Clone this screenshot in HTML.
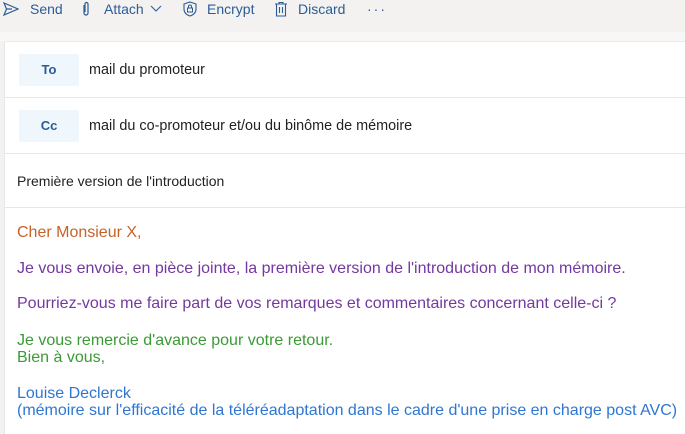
<!DOCTYPE html>
<html><head><meta charset="utf-8"><style>
*{margin:0;padding:0;box-sizing:border-box}
body{width:685px;height:434px;overflow:hidden;background:#f3f2f1;font-family:"Liberation Sans",sans-serif;position:relative}
.tb{position:absolute;top:0;left:0;height:32px;width:685px;background:#f3f2f1}
.band{position:absolute;top:32px;left:0;width:685px;height:9px;background:#f8f7f6}
.ti{position:absolute;top:1px;font-size:14px;color:#2b5c96;line-height:16px}
.panel{position:absolute;left:4px;top:41px;width:681px;height:393px;background:#fff;border-left:1px solid #e8e8e8;border-top:1px solid #ebebeb}
.hr{position:absolute;left:0;right:0;height:1px;background:#e6e6e6}
.box{position:absolute;left:14px;width:60px;height:32px;background:#eff6fc;color:#2b5c96;font-weight:bold;font-size:13px;text-align:center;line-height:32px}
.f{position:absolute;left:84px;font-size:14.4px;color:#222;line-height:16px}
.b{position:absolute;left:12px;font-family:Arial,"Liberation Sans",sans-serif;font-size:16px;line-height:17px;white-space:nowrap}
</style></head><body>
<div class="tb">
<svg style="position:absolute;left:3px;top:2px" width="16" height="14" viewBox="0 0 16 14"><path d="M1 1 L15 7 L1 13 L3.5 7 Z M3.5 7 H9" fill="none" stroke="#2b5c96" stroke-width="1.2"/></svg>
<div class="ti" style="left:30px">Send</div>
<svg style="position:absolute;left:82px;top:1px" width="8" height="16" viewBox="0 0 8 16"><path d="M2 4 V12 a2 2 0 0 0 4 0 V3 a1.5 1.5 0 0 0 -3 0 V11" fill="none" stroke="#2b5c96" stroke-width="1.2"/></svg>
<div class="ti" style="left:104px">Attach</div>
<svg style="position:absolute;left:150px;top:5px" width="12" height="8" viewBox="0 0 12 8"><path d="M1 1 L6 6 L11 1" fill="none" stroke="#2b5c96" stroke-width="1.1"/></svg>
<svg style="position:absolute;left:182px;top:1px" width="16" height="16" viewBox="0 0 16 16"><path d="M8 1 L14 3 V8 C14 12 11 14 8 15 C5 14 2 12 2 8 V3 Z" fill="none" stroke="#2b5c96" stroke-width="1.1"/><rect x="5.5" y="7" width="5" height="4" fill="none" stroke="#2b5c96"/><path d="M6.5 7 V5.5 a1.5 1.5 0 0 1 3 0 V7" fill="none" stroke="#2b5c96"/></svg>
<div class="ti" style="left:207px">Encrypt</div>
<svg style="position:absolute;left:274px;top:1px" width="14" height="16" viewBox="0 0 14 16"><path d="M1 3 H13 M5 3 V1.5 H9 V3 M2.5 3 V15 H11.5 V3 M5.5 6 V12 M8.5 6 V12" fill="none" stroke="#2b5c96" stroke-width="1.1"/></svg>
<div class="ti" style="left:298px">Discard</div>
<div class="ti" style="left:367px;letter-spacing:2px">···</div>
</div>
<div class="band"></div>
<div class="panel">
<div class="box" style="top:12px">To</div>
<div class="f" style="top:20px">mail du promoteur</div>
<div class="hr" style="top:55px"></div>
<div class="box" style="top:68px">Cc</div>
<div class="f" style="top:76px">mail du co-promoteur et/ou du binôme de mémoire</div>
<div class="hr" style="top:111px"></div>
<div class="f" style="left:12px;top:131px;font-size:14px">Première version de l'introduction</div>
<div class="hr" style="top:165px"></div>
<div class="b" style="top:182px;color:#c5622a">Cher Monsieur X,</div>
<div class="b" style="top:218px;color:#7438a0">Je vous envoie, en pièce jointe, la première version de l'introduction de mon mémoire.</div>
<div class="b" style="top:253px;color:#7438a0">Pourriez-vous me faire part de vos remarques et commentaires concernant celle-ci ?</div>
<div class="b" style="top:290px;color:#3b9a35">Je vous remercie d'avance pour votre retour.<br>Bien à vous,</div>
<div class="b" style="top:343px;color:#2f76d2">Louise Declerck<br>(mémoire sur l'efficacité de la téléréadaptation dans le cadre d'une prise en charge post AVC)</div>
</div>
</body></html>
